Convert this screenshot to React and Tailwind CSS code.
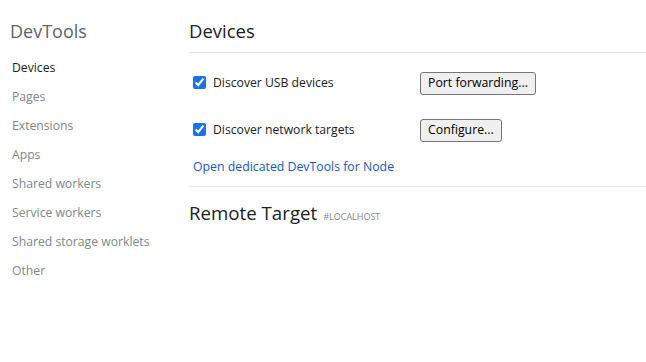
import React from "react";

const navItems = [
  "Devices",
  "Pages",
  "Extensions",
  "Apps",
  "Shared workers",
  "Service workers",
  "Shared storage worklets",
  "Other",
];

function CheckRow({ label, button }) {
  return (
    <div className="flex items-center h-[24px]">
      <label className="flex items-center w-[231px] pl-[4px]">
        <input type="checkbox" defaultChecked className="w-[13px] h-[13px] m-0 accent-[#1a73e8]" />
        <span className="ml-[7px] text-[12.2px] text-[#202124]">{label}</span>
      </label>
      <button className="h-[23px] px-[7px] text-[12.3px] text-black bg-[#efefef] border border-[#767676] rounded-[3px] leading-none">
        {button}
      </button>
    </div>
  );
}

export default function App() {
  return (
    <div className="w-[646px] h-[362px] bg-white flex font-['Open_Sans','Noto_Sans',sans-serif] overflow-hidden">
      {/* sidebar */}
      <div className="w-[189px] shrink-0 pl-[10px]">
        <div className="mt-[18px] text-[18px] leading-[26px] text-[#5f6368]">DevTools</div>
        <div className="mt-[10px] pl-[2px] flex flex-col">
          {navItems.map((item, i) => (
            <div
              key={item}
              className={`h-[29px] flex items-center text-[12.2px] ${i === 0 ? "text-[#202124]" : "text-[#80868b]"}`}
            >
              {item}
            </div>
          ))}
        </div>
      </div>

      {/* main */}
      <div className="flex-1">
        <div className="mt-[18px] text-[18.5px] leading-[26px] text-[#202124]">Devices</div>
        <div className="mt-[8px] border-t border-[#e8eaed]"></div>
        <div className="mt-[18px] flex flex-col gap-[23px]">
          <CheckRow label="Discover USB devices" button="Port forwarding..." />
          <CheckRow label="Discover network targets" button="Configure..." />
        </div>
        <div className="mt-[15px] pl-[4px] text-[12.3px] text-[#1a55d6] leading-[20px]">
          Open dedicated DevTools for Node
        </div>
        <div className="mt-[9px] border-t border-[#e8eaed]"></div>
        <div className="mt-[13px] flex items-baseline">
          <span className="text-[18.7px] leading-[26px] text-[#202124]">Remote Target</span>
          <span className="ml-[6px] text-[9px] text-[#80868b] uppercase">#localhost</span>
        </div>
      </div>
    </div>
  );
}
